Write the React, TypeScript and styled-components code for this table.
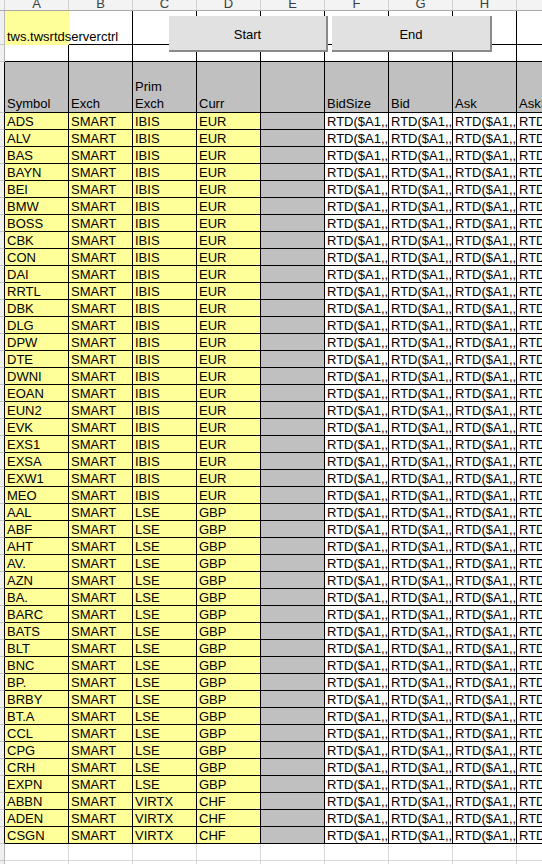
import React from "react";
import styled, { createGlobalStyle } from "styled-components";

const YELLOW = "#ffff99";
const GRAY = "#c0c0c0";
const BLACK = "#000000";
const LIGHT = "#d9d9d9";

const Global = createGlobalStyle`
  html, body { margin: 0; padding: 0; background: #ffffff; overflow: hidden; }
  body {
    font-family: "Liberation Sans", Arial, sans-serif;
    font-size: 13px;
    color: #000;
  }
`;

const Sheet = styled.div`
  position: relative;
  width: 542px;
  height: 864px;
  overflow: hidden;
  background: #ffffff;
`;

const Grid = styled.div`
  display: flex;
  flex-direction: column;
  width: 600px;
`;

const ColHeadRow = styled.div`
  display: flex;
  height: 10px;
  border-bottom: 1px solid #a9a9a9;
  background: #f3f3f3;
  overflow: hidden;
`;

const Corner = styled.div`
  flex: none;
  width: 4px;
  border-right: 1px solid #cfcfcf;
`;

const ColLetter = styled.div`
  flex: none;
  box-sizing: border-box;
  width: 64px;
  border-right: 1px solid #d2d2d2;
  text-align: center;
  font-size: 13px;
  line-height: 7px;
  color: #3c3c3c;
`;

const Row = styled.div<{ $h: number }>`
  display: flex;
  height: ${(p) => p.$h}px;
`;

const RowHead = styled.div<{ $edge?: string }>`
  flex: none;
  box-sizing: border-box;
  width: 5px;
  height: 100%;
  background: #f0f0f0;
  border-right: 1px solid ${(p) => p.$edge ?? "#b8b8b8"};
  border-bottom: 1px solid #c8c8c8;
`;

const Cell = styled.div<{
  $fill?: string;
  $r?: string;
  $b?: string;
  $clip?: boolean;
}>`
  flex: none;
  box-sizing: border-box;
  width: 64px;
  height: 100%;
  background: ${(p) => p.$fill ?? "transparent"};
  border-right: 1px solid ${(p) => p.$r ?? BLACK};
  border-bottom: 1px solid ${(p) => p.$b ?? BLACK};
  display: flex;
  align-items: flex-end;
  padding: 0 2px;
  line-height: 15px;
  white-space: nowrap;
  overflow: ${(p) => (p.$clip ? "hidden" : "visible")};
`;

const HeadCell = styled(Cell)`
  line-height: 17px;
  flex-direction: column;
  justify-content: flex-end;
  align-items: flex-start;
`;

const Button = styled.div<{ $left: number; $w: number }>`
  position: absolute;
  top: 16px;
  left: ${(p) => p.$left}px;
  width: ${(p) => p.$w}px;
  height: 36px;
  box-sizing: border-box;
  background: #e1e1e1;
  border-right: 2px solid #8a8a8a;
  border-bottom: 2px solid #8a8a8a;
  display: flex;
  align-items: center;
  justify-content: center;
  font-size: 13px;
  line-height: 15px;
  padding-top: 3px;
  color: #000;
`;

const LETTERS = ["A", "B", "C", "D", "E", "F", "G", "H", "I"];

const DATA: [string, string, string][] = [
  ["ADS", "IBIS", "EUR"],
  ["ALV", "IBIS", "EUR"],
  ["BAS", "IBIS", "EUR"],
  ["BAYN", "IBIS", "EUR"],
  ["BEI", "IBIS", "EUR"],
  ["BMW", "IBIS", "EUR"],
  ["BOSS", "IBIS", "EUR"],
  ["CBK", "IBIS", "EUR"],
  ["CON", "IBIS", "EUR"],
  ["DAI", "IBIS", "EUR"],
  ["RRTL", "IBIS", "EUR"],
  ["DBK", "IBIS", "EUR"],
  ["DLG", "IBIS", "EUR"],
  ["DPW", "IBIS", "EUR"],
  ["DTE", "IBIS", "EUR"],
  ["DWNI", "IBIS", "EUR"],
  ["EOAN", "IBIS", "EUR"],
  ["EUN2", "IBIS", "EUR"],
  ["EVK", "IBIS", "EUR"],
  ["EXS1", "IBIS", "EUR"],
  ["EXSA", "IBIS", "EUR"],
  ["EXW1", "IBIS", "EUR"],
  ["MEO", "IBIS", "EUR"],
  ["AAL", "LSE", "GBP"],
  ["ABF", "LSE", "GBP"],
  ["AHT", "LSE", "GBP"],
  ["AV.", "LSE", "GBP"],
  ["AZN", "LSE", "GBP"],
  ["BA.", "LSE", "GBP"],
  ["BARC", "LSE", "GBP"],
  ["BATS", "LSE", "GBP"],
  ["BLT", "LSE", "GBP"],
  ["BNC", "LSE", "GBP"],
  ["BP.", "LSE", "GBP"],
  ["BRBY", "LSE", "GBP"],
  ["BT.A", "LSE", "GBP"],
  ["CCL", "LSE", "GBP"],
  ["CPG", "LSE", "GBP"],
  ["CRH", "LSE", "GBP"],
  ["EXPN", "LSE", "GBP"],
  ["ABBN", "VIRTX", "CHF"],
  ["ADEN", "VIRTX", "CHF"],
  ["CSGN", "VIRTX", "CHF"],
];

const FIELDS = ["BidSize", "Bid", "Ask", "AskSize"];

export default function App() {
  return (
    <Sheet>
      <Global />
      <Grid>
        <ColHeadRow>
          <Corner />
          {LETTERS.map((l) => (
            <ColLetter key={l}>{l}</ColLetter>
          ))}
        </ColHeadRow>

        <Row $h={34}>
          <RowHead />
          <Cell $fill={YELLOW} $r="transparent" $b="transparent">
            tws.twsrtdserverctrl
          </Cell>
          {LETTERS.slice(1).map((l) => (
            <Cell key={l} />
          ))}
        </Row>

        <Row $h={17}>
          <RowHead />
          {LETTERS.map((l) => (
            <Cell key={l} />
          ))}
        </Row>

        <Row $h={51}>
          <RowHead $edge={BLACK} />
          <HeadCell $fill={GRAY}>
            <span>Symbol</span>
          </HeadCell>
          <HeadCell $fill={GRAY}>
            <span>Exch</span>
          </HeadCell>
          <HeadCell $fill={GRAY}>
            <span>Prim</span>
            <span>Exch</span>
          </HeadCell>
          <HeadCell $fill={GRAY}>
            <span>Curr</span>
          </HeadCell>
          <HeadCell $fill={GRAY} />
          {FIELDS.map((f) => (
            <HeadCell key={f} $fill={GRAY} $clip>
              <span>{f}</span>
            </HeadCell>
          ))}
        </Row>

        {DATA.map(([sym, prim, curr]) => (
          <Row key={sym} $h={17}>
            <RowHead $edge={BLACK} />
            <Cell $fill={YELLOW} $clip>
              {sym}
            </Cell>
            <Cell $fill={YELLOW} $clip>
              SMART
            </Cell>
            <Cell $fill={YELLOW} $clip>
              {prim}
            </Cell>
            <Cell $fill={YELLOW} $clip>
              {curr}
            </Cell>
            <Cell $fill={GRAY} />
            {FIELDS.map((f) => (
              <Cell key={f} $fill="#ffffff" $clip>
                {`RTD($A1,,"${f}")`}
              </Cell>
            ))}
          </Row>
        ))}

        {[0, 1].map((k) => (
          <Row key={`blank${k}`} $h={17}>
            <RowHead />
            {LETTERS.map((l) => (
              <Cell key={l} $r={LIGHT} $b={LIGHT} />
            ))}
          </Row>
        ))}
      </Grid>

      <Button $left={169} $w={159}>Start</Button>
      <Button $left={332} $w={160}>End</Button>
    </Sheet>
  );
}
